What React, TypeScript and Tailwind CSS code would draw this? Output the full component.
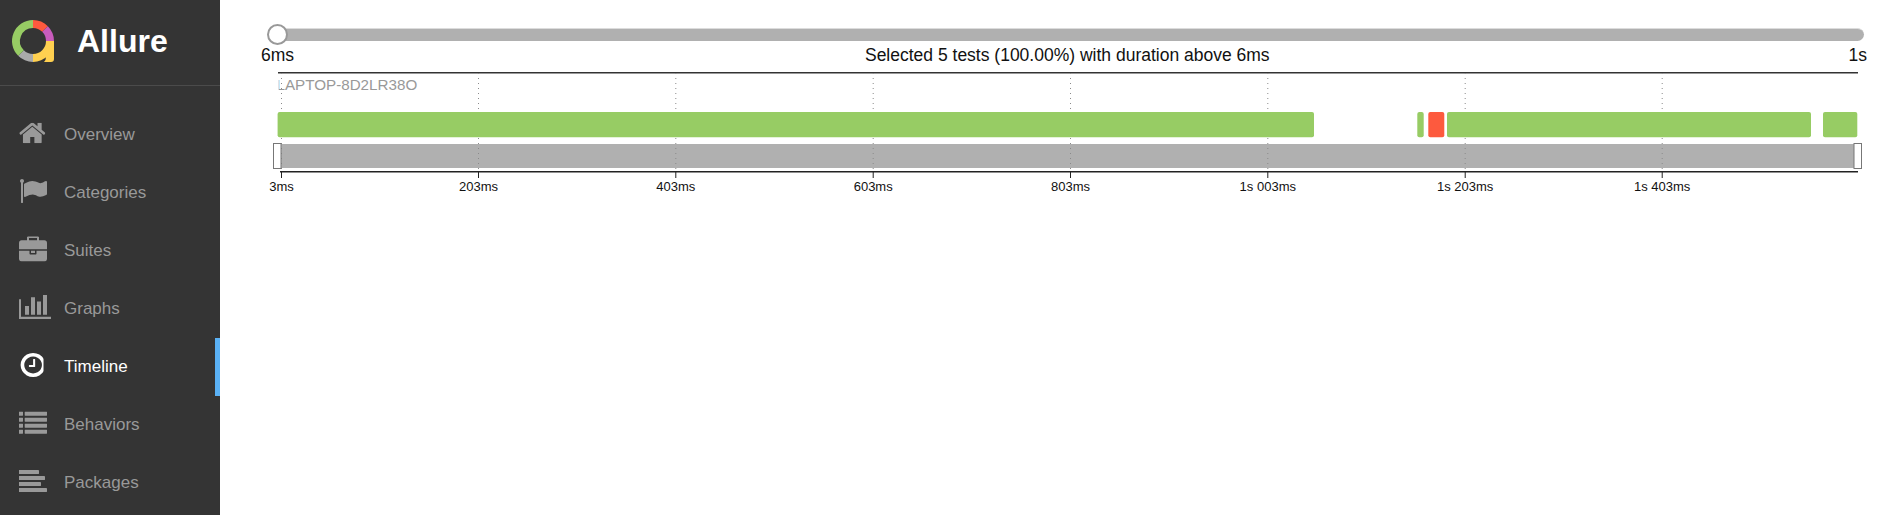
const gridXs = [281, 478, 675.3, 872.7, 1070, 1267.3, 1464.7, 1661.7];
const ticks = ["3ms", "203ms", "403ms", "603ms", "803ms", "1s 003ms", "1s 203ms", "1s 403ms"];
const bars = [
  { x: 277.6, w: 1036.4, c: "#97cc64" },
  { x: 1417.3, w: 6.4, c: "#97cc64" },
  { x: 1428.3, w: 16, c: "#fd5a3e" },
  { x: 1447, w: 364, c: "#97cc64" },
  { x: 1823, w: 34.3, c: "#97cc64" },
];

function Logo() {
  const cx = 22, cy = 22, r = 17;
  const pt = (deg: number) => {
    const a = ((deg - 90) * Math.PI) / 180;
    return `${cx + r * Math.cos(a)} ${cy + r * Math.sin(a)}`;
  };
  const arc = (from: number, to: number, color: string) => (
    <path d={`M${pt(from)} A${r} ${r} 0 ${to - from > 180 ? 1 : 0} 1 ${pt(to)}`} fill="none" stroke={color} strokeWidth="8" />
  );
  return (
    <svg width="44" height="44" viewBox="0 0 44 44" className="shrink-0">
      {arc(0, 45, "#fd5a3e")}
      {arc(45, 90, "#c95cbd")}
      {arc(90, 180, "#ffd050")}
      {arc(180, 225, "#aaaaaa")}
      {arc(225, 360, "#97cc64")}
      <path d="M35 22H43V40Q43 43 40 43H33Q35 41 35 38Z" fill="#ffd050" />
    </svg>
  );
}

const iconBox = "shrink-0 w-[45px] h-[30px] mb-[3px]";

function IconSvg({ children, color }: { children: React.ReactNode; color: string }) {
  return (
    <svg viewBox="0 0 45 30" className={iconBox} fill={color}>
      {children}
    </svg>
  );
}

const icons: Record<string, (c: string) => React.ReactNode> = {
  Overview: (c) => (
    <IconSvg color={c}>
      <svg x="0.3" y="4.7" width="26" height="20.6" viewBox="96 256 1600 1280" preserveAspectRatio="none">
        <path d="M1472 992v480q0 26-19 45t-45 19h-384v-384h-256v384h-384q-26 0-45-19t-19-45v-480q0-1 .5-3t.5-3l575-474 575 474q1 2 1 6zm223-69l-62 74q-8 9-21 11h-3q-13 0-21-7l-692-577-692 577q-12 8-24 7-13-2-21-11l-62-74q-8-10-7-23.500t11-20.500l719-599q32-26 76-26t76 26l244 204v-195q0-14 9-23t23-9h192q14 0 23 9t9 23v408l219 182q10 8 11 21.500t-7 23.500z" />
      </svg>
    </IconSvg>
  ),
  Categories: (c) => (
    <IconSvg color={c}>
      <svg x="1" y="3" width="27" height="24" viewBox="64 128 1728 1536" preserveAspectRatio="none">
        <path d="M320 256q0 72-64 110v1266q0 13-9.500 22.500t-22.500 9.500h-64q-13 0-22.500-9.500t-9.500-22.500v-1266q-64-38-64-110 0-53 37.500-90.500t90.500-37.500 90.500 37.500 37.500 90.500zm1472 64v763q0 25-12.500 38.500t-39.500 27.500q-215 116-369 116-61 0-123.500-22t-108.500-48-115.500-48-142.500-22q-192 0-464 146-17 9-33 9-26 0-45-19t-19-45v-742q0-32 31-55 21-14 79-43 236-120 421-120 107 0 200 29t219 88q38 19 88 19 54 0 117.500-21t110-47 88-47 54.500-21q26 0 45 19t19 45z" />
      </svg>
    </IconSvg>
  ),
  Suites: (c) => (
    <IconSvg color={c}>
      <svg x="0" y="2.5" width="28" height="25" viewBox="0 32 1792 1504" preserveAspectRatio="none">
        <path d="M640 256h512v-128h-512v128zm1152 640v480q0 66-47 113t-113 47h-1472q-66 0-113-47t-47-113v-480h672v160q0 26 19 45t45 19h320q26 0 45-19t19-45v-160h672zm-768 0v128h-256v-128h256zm768-480v384h-1792v-384q0-66 47-113t113-47h352v-160q0-40 28-68t68-28h576q40 0 68 28t28 68v160h352q66 0 113 47t47 113z" />
      </svg>
    </IconSvg>
  ),
  Graphs: (c) => (
    <IconSvg color={c}>
      <svg x="0" y="3" width="32" height="24" viewBox="0 256 2048 1408" preserveAspectRatio="none">
        <path d="M640 896v512h-256v-512h256zm384-512v1024h-256v-1024h256zm1024 1152v128h-2048v-1152h128v1024h1920zm-640-896v768h-256v-768h256zm384-384v1152h-256v-1152h256z" />
      </svg>
    </IconSvg>
  ),
  Timeline: (c) => (
    <IconSvg color={c}>
      <svg x="-0.5" y="3" width="25" height="24" viewBox="0 128 1536 1536" preserveAspectRatio="none">
        <path d="M1024 544v448q0 14-9 23t-23 9h-320q-14 0-23-9t-9-23v-64q0-14 9-23t23-9h224v-352q0-14 9-23t23-9h64q14 0 23 9t9 23zm416 352q0-148-73-273t-198-198-273-73-273 73-198 198-73 273 73 273 198 198 273 73 273-73 198-198 73-273zm224 0q0 209-103 385.500t-279.500 279.500-385.500 103-385.500-103-279.500-279.500-103-385.500 103-385.500 279.500-279.500 385.500-103 385.500 103 279.500 279.500 103 385.500z" />
      </svg>
    </IconSvg>
  ),
  Behaviors: (c) => (
    <IconSvg color={c}>
      {[3.7, 9.7, 15.7, 21.7].map((y) => (
        <g key={y}>
          <rect x="-0.3" y={y} width="4.3" height="4" rx="0.4" />
          <rect x="5.7" y={y} width="22.3" height="4" rx="0.4" />
        </g>
      ))}
    </IconSvg>
  ),
  Packages: (c) => (
    <IconSvg color={c}>
      {[
        [4, 20.3],
        [10, 26.3],
        [16, 22.3],
        [22, 28.3],
      ].map(([y, w]) => (
        <rect key={y} x="-0.3" y={y} width={w} height="4" rx="0.4" />
      ))}
    </IconSvg>
  ),
};

const navItems = ["Overview", "Categories", "Suites", "Graphs", "Timeline", "Behaviors", "Packages"];

function Sidebar() {
  return (
    <aside className="w-[220px] h-full shrink-0 bg-[#343434] overflow-hidden">
      <div className="h-[86px] flex items-center pl-[11px] pb-[4px] border-b border-[#4b4b4b]">
        <Logo />
        <span className="ml-[22px] text-[32px] font-bold text-white leading-none">Allure</span>
      </div>
      <nav className="pt-[20px]">
        {navItems.map((name) => {
          const active = name === "Timeline";
          const color = active ? "#ffffff" : "#999999";
          return (
            <div
              key={name}
              className={`relative h-[58px] flex items-center pl-[19px] pb-[1px] text-[17px] ${active ? "text-white" : "text-[#999999]"}`}
            >
              {icons[name](color)}
              <span>{name}</span>
              {active && <span className="absolute right-0 top-0 bottom-0 w-[5px] bg-[#5ab1f5]" />}
            </div>
          );
        })}
      </nav>
    </aside>
  );
}

function Chart() {
  return (
    <svg viewBox="220 70 1669 125" className="block w-[1669px] h-[125px]" style={{ fontFamily: "'Liberation Sans', Arial, sans-serif" }}>
      <text x="276.5" y="90" fontSize="15.2" fill="#999999">LAPTOP-8D2LR38O</text>
      <rect x="270" y="74" width="8.7" height="26" fill="#ffffff" />
      <rect x="278" y="72" width="1580" height="1.5" fill="#333333" />
      <rect x="278" y="144" width="1580" height="24" fill="#b0b0b0" />
      {gridXs.map((x) => (
        <line key={x} x1={x + 0.5} x2={x + 0.5} y1="73" y2="170" stroke="#8a8a8a" strokeDasharray="1 4" />
      ))}
      {bars.map((b) => (
        <rect key={b.x} x={b.x} y="112" width={b.w} height="25.3" rx="2" fill={b.c} />
      ))}
      <rect x="273.5" y="143.500" width="7.500" height="25" fill="#ffffff" stroke="#777777" />
      <rect x="1854" y="143.500" width="7.500" height="25" fill="#ffffff" stroke="#777777" />
      <rect x="280" y="171" width="1578" height="1.500" fill="#222222" />
      {gridXs.map((x, i) => (
        <g key={ticks[i]}>
          <rect x={x} y="171" width="1" height="7" fill="#222222" />
          <text x={x + 0.5} y="191" fontSize="13" textAnchor="middle" fill="#111111">{ticks[i]}</text>
        </g>
      ))}
    </svg>
  );
}

export default function App() {
  return (
    <div className="flex w-full h-[515px] bg-white font-['Liberation_Sans',Arial,sans-serif] overflow-hidden">
      <Sidebar />
      <main className="flex-1 min-w-0">
        <div className="h-[70px] pt-[28px] pl-[58px] pr-[25px]">
          <div className="relative h-[13px] rounded-full bg-[#b0b0b0] border-t border-[#dcdcdc]">
            <span className="absolute left-[-11px] top-[-5px] w-[21px] h-[21px] rounded-full bg-white border-2 border-[#999999]" />
          </div>
          <div className="flex justify-between items-center -ml-[17px] -mr-[3px] mt-[4px] text-[17.5px] leading-[20px] text-[#111111]">
            <span>6ms</span>
            <span className="mr-[8px]">Selected 5 tests (100.00%) with duration above 6ms</span>
            <span>1s</span>
          </div>
        </div>
        <Chart />
      </main>
    </div>
  );
}
